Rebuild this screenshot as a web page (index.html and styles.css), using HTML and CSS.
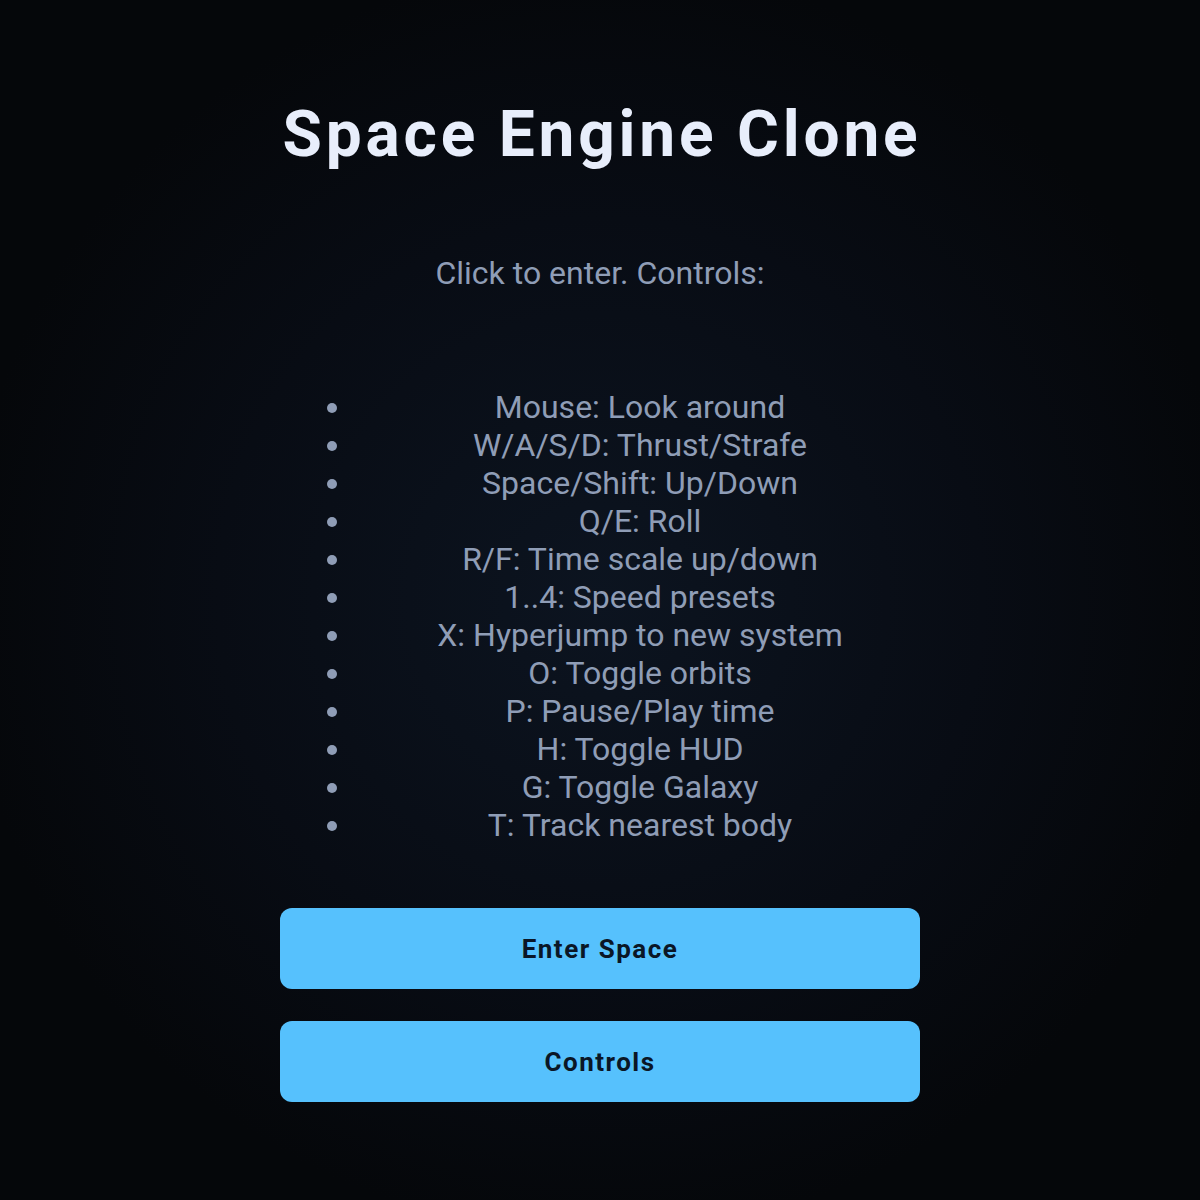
FILE: index.html
```html
<!DOCTYPE html>
<html lang="en">
<head>
  <meta charset="UTF-8" />
  <meta name="viewport" content="width=device-width, initial-scale=1.0" />
  <title>Space Engine Clone</title>
  <link rel="stylesheet" href="styles.css">
</head>
<body>
  <div class="menu">
    <h1>Space Engine Clone</h1>
    <p class="hint">Click to enter. Controls:</p>
    <ul class="controls">
      <li>Mouse: Look around</li>
      <li>W/A/S/D: Thrust/Strafe</li>
      <li>Space/Shift: Up/Down</li>
      <li>Q/E: Roll</li>
      <li>R/F: Time scale up/down</li>
      <li>1..4: Speed presets</li>
      <li>X: Hyperjump to new system</li>
      <li>O: Toggle orbits</li>
      <li>P: Pause/Play time</li>
      <li>H: Toggle HUD</li>
      <li>G: Toggle Galaxy</li>
      <li>T: Track nearest body</li>
    </ul>
    <button id="enterBtn">Enter Space</button>
    <button id="controlsBtn">Controls</button>
  </div>
</body>
</html>
```

FILE: styles.css
```css
html, body {
  height: 100%;
}
body {
  margin: 0;
  font-family: Roboto, "Liberation Sans", sans-serif;
  background: radial-gradient(circle at 50% 50%, #0c1420 0%, #080c14 45%, #05070a 75%);
  color: #e6edf9;
}
.menu {
  width: 640px;
  margin: 0 auto;
  padding-top: 99px;
  text-align: center;
  display: flex;
  flex-direction: column;
}
h1 {
  margin: 0 -16px 0 -12px;
  white-space: nowrap;
  font-size: 64px;
  line-height: 72px;
  font-weight: 700;
  letter-spacing: 3.8px;
  color: #e8eefb;
}
.hint {
  margin: 83px 0 0;
  font-size: 32px;
  line-height: 38px;
  color: #8f9db6;
}
.controls {
  margin: 96px -6px 0 0;
  padding-left: 74px;
  font-size: 32px;
  line-height: 38px;
  color: #8f9db6;
}
button {
  height: 81px;
  border: none;
  border-radius: 12px;
  background-color: #56c1fd;
  color: #0a1626;
  font-family: Roboto, "Liberation Sans", sans-serif;
  font-size: 26px;
  font-weight: 700;
  letter-spacing: 1.5px;
  cursor: pointer;
}
#enterBtn {
  margin-top: 64px;
}
#controlsBtn {
  margin-top: 32px;
}
```
